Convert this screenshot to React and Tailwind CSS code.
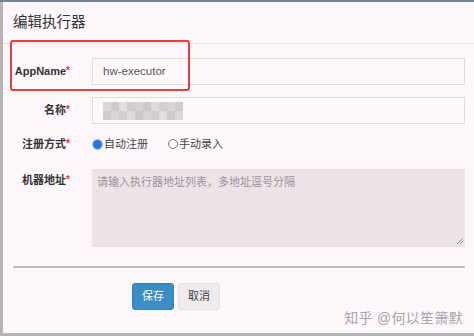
const cjk = { fontFamily: '"Liberation Sans", "Noto Sans CJK SC", sans-serif' };

function Label({ children }) {
  return (
    <div className="w-[67px] shrink-0 text-right text-[11px] font-bold text-[#333] leading-none">
      {children}
      <span className="text-[#d33] align-top text-[10px]">*</span>
    </div>
  );
}

function Radio({ checked, children }) {
  return (
    <label className="flex items-center text-[11px] text-[#444]">
      {checked ? (
        <span className="w-[11px] h-[11px] rounded-full border border-[#8fb6e6] flex items-center justify-center mr-[1px]">
          <span className="w-[9px] h-[9px] rounded-full bg-[#2a78d6]" />
        </span>
      ) : (
        <span className="w-[10px] h-[10px] rounded-full border border-[#777] bg-white mr-[1px]" />
      )}
      {children}
    </label>
  );
}

function Blurred() {
  const cells = ["#dcd5d9", "#cfc8cc", "#e3dce0", "#d2cbcf", "#d8d1d5", "#cdc6ca", "#e0d9dd", "#d4cdd1", "#dbd4d8", "#d0c9cd"];
  return (
    <div className="flex flex-col blur-[0.6px]">
      <div className="flex">
        {cells.map((c, i) => (
          <span key={i} className="w-[8px] h-[9px]" style={{ background: c }} />
        ))}
      </div>
      <div className="flex">
        {cells.slice().reverse().map((c, i) => (
          <span key={i} className="w-[8px] h-[9px]" style={{ background: c }} />
        ))}
      </div>
    </div>
  );
}

export default function App() {
  return (
    <div className="relative w-[474px] h-[336px] flex flex-col bg-[#b9b3b7] overflow-hidden" style={cjk}>
      <div className="h-[2px] bg-[#6e8593]" />
      <div className="flex-1 flex">
        <div className="w-[3px]" />
        <div className="flex-1 bg-[#fdf6fa] flex flex-col">
          <div className="h-[42px] px-[10px] border-b border-[#ece3e8] flex items-center">
            <span className="text-[14.5px] text-[#333]">编辑执行器</span>
          </div>

          <div className="flex items-center h-[27px] mt-[14px]">
            <Label>AppName</Label>
            <div className="ml-[22px] mr-[9px] flex-1 h-full border border-[#e2dadf] bg-[#fef8fb] flex items-center px-[10px] text-[11.5px] text-[#555]">
              hw-executor
            </div>
          </div>

          <div className="flex items-center h-[27px] mt-[12px]">
            <Label>名称</Label>
            <div className="ml-[22px] mr-[9px] flex-1 h-full border border-[#e2dadf] bg-[#fef8fb] flex items-center px-[10px]">
              <Blurred />
            </div>
          </div>

          <div className="flex items-center h-[20px] mt-[10px]">
            <Label>注册方式</Label>
            <div className="ml-[22px] flex items-center gap-[20px]">
              <Radio checked>自动注册</Radio>
              <Radio>手动录入</Radio>
            </div>
          </div>

          <div className="flex items-start h-[78px] mt-[15px]">
            <div className="pt-[6px]">
              <Label>机器地址</Label>
            </div>
            <div className="relative ml-[22px] mr-[9px] flex-1 h-full bg-[#ebe3e8] px-[5px] pt-[5px] text-[11px] text-[#9a9498]">
              请输入执行器地址列表，多地址逗号分隔
              <svg className="absolute right-[2px] bottom-[3px]" width="6" height="6" viewBox="0 0 6 6">
                <path d="M0 6L6 0M3 6L6 3" stroke="#777" strokeWidth="0.8" />
              </svg>
            </div>
          </div>

          <div className="mt-[19px] ml-[10px] mr-[9px] h-[2px] bg-[#c1bbbf]" />

          <div className="flex mt-[15px] ml-[129px] gap-[4px]">
            <button className="w-[42px] h-[27px] rounded-[3px] bg-[#3c8dc4] border border-[#3580b5] text-white text-[11px]">保存</button>
            <button className="w-[42px] h-[27px] rounded-[3px] bg-[#f0eaee] border border-[#e6dee3] text-[#444] text-[11px]">取消</button>
          </div>
        </div>
      </div>
      <div className="h-[3px]" />

      <div className="absolute left-[10px] top-[40px] w-[180px] h-[51px] border-2 border-[#e2403a] rounded-[3px]" />
      <div className="absolute right-[11px] top-[308px] text-[14px] text-[#aaa4a8] tracking-[0.3px]">
        知乎 @何以笙箫默
      </div>
    </div>
  );
}
